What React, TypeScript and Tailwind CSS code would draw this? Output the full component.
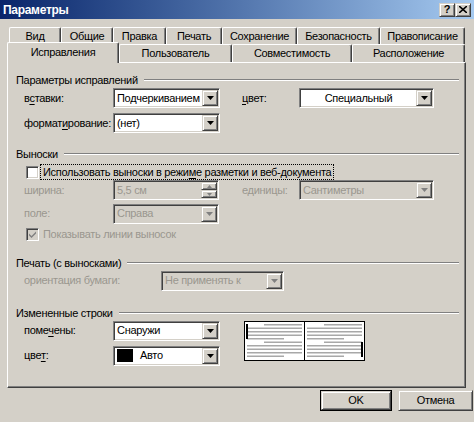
import type { ReactNode } from "react";

const sunken =
  "border border-t-[#808080] border-l-[#808080] border-r-white border-b-white shadow-[inset_1px_1px_0_#404040,inset_-1px_-1px_0_#d4d0c8]";
const raised =
  "border border-t-[#d4d0c8] border-l-[#d4d0c8] border-r-[#404040] border-b-[#404040] shadow-[inset_1px_1px_0_#ffffff,inset_-1px_-1px_0_#808080]";

function Arrow({ disabled }: { disabled?: boolean }) {
  return (
    <div className={`w-[16px] h-full flex items-center justify-center bg-[#d4d0c8] ${raised}`}>
      <svg width="7" height="4" viewBox="0 0 7 4">
        <path d="M0 0h7L3.5 4z" fill={disabled ? "#808080" : "#000"} />
      </svg>
    </div>
  );
}

function Combo({
  w,
  value,
  disabled,
  center,
  swatch,
}: {
  w: string;
  value: string;
  disabled?: boolean;
  center?: boolean;
  swatch?: boolean;
}) {
  return (
    <div className={`flex h-[20px] ${w} ${sunken} p-[1px] ${disabled ? "bg-[#d4d0c8]" : "bg-white"}`}>
      <div
        className={`flex-1 flex items-center overflow-hidden whitespace-nowrap px-[2px] ${
          center ? "justify-center" : ""
        } ${disabled ? "text-[#9a978f]" : "text-black"}`}
      >
        {swatch && <div className="w-[16px] h-[13px] bg-black mr-[7px]" />}
        {value}
      </div>
      <Arrow disabled={disabled} />
    </div>
  );
}

function Spin({ w, value }: { w: string; value: string }) {
  return (
    <div className={`flex h-[20px] ${w} ${sunken} p-[1px] bg-[#d4d0c8]`}>
      <div className="flex-1 flex items-center px-[2px] text-[#9a978f]">{value}</div>
      <div className="flex flex-col w-[16px] h-full">
        <div className={`flex-1 flex items-center justify-center bg-[#d4d0c8] ${raised}`}>
          <svg width="5" height="3" viewBox="0 0 5 3">
            <path d="M0 3h5L2.5 0z" fill="#808080" />
          </svg>
        </div>
        <div className={`flex-1 flex items-center justify-center bg-[#d4d0c8] ${raised}`}>
          <svg width="5" height="3" viewBox="0 0 5 3">
            <path d="M0 0h5L2.5 3z" fill="#808080" />
          </svg>
        </div>
      </div>
    </div>
  );
}

function Group({ label, mt }: { label: string; mt: string }) {
  return (
    <div className={`flex items-center h-[12px] pl-[8px] pr-[6px] ${mt}`}>
      <span className="whitespace-nowrap">{label}</span>
      <div className="flex-1 ml-[6px] border-t border-t-[#808080] border-b border-b-white" />
    </div>
  );
}

function Check({ checked, disabled }: { checked?: boolean; disabled?: boolean }) {
  return (
    <div className={`w-[13px] h-[13px] ${sunken} flex items-center justify-center ${disabled ? "bg-[#d4d0c8]" : "bg-white"}`}>
      {checked && (
        <svg width="7" height="7" viewBox="0 0 7 7">
          <path d="M0 2.5l2.5 2.5L7 0.5v2L2.5 7 0 4.5z" fill={disabled ? "#808080" : "#000"} />
        </svg>
      )}
    </div>
  );
}

function Tab({ w, children }: { w: string; children: ReactNode }) {
  return (
    <div
      className={`${w} h-full flex items-center justify-center border-t border-l border-t-white border-l-white border-r border-r-[#404040] shadow-[inset_-1px_0_0_#808080] rounded-tl-[2px] rounded-tr-[2px] whitespace-nowrap`}
    >
      {children}
    </div>
  );
}

function Preview() {
  const lines = [3, 6.5, 10, 13.5, 17, 20.5, 24, 27.5, 31, 34.5];
  const page = (x: number, bar: "left" | "right") => (
    <g>
      <rect x={x + 0.5} y={0.5} width={60} height={39} fill="#fff" stroke="#000" />
      {lines.map((y, i) => {
        const start = i === 0 || i === 5 ? x + 20 : x + 3;
        const end = i === 4 || i === 9 ? x + 40 : x + 58;
        return <rect key={y} x={start} y={y} width={end - start} height={1.5} fill="#a8a8a8" />;
      })}
      {bar === "left" ? (
        <rect x={x + 2} y={3} width={2} height={15} fill="#000" />
      ) : (
        <rect x={x + 57} y={21} width={2} height={15} fill="#000" />
      )}
    </g>
  );
  return (
    <svg width="122" height="41" viewBox="0 0 122 41">
      {page(0, "left")}
      {page(60, "right")}
    </svg>
  );
}

function U({ children }: { children: ReactNode }) {
  return <span className="underline underline-offset-2">{children}</span>;
}

export default function App() {
  return (
    <div
      className="w-[474px] h-[422px] bg-[#d4d0c8] overflow-hidden flex flex-col text-[11px] leading-none tracking-[-0.3px] text-black"
      style={{ fontFamily: '"Liberation Sans", Arial, sans-serif' }}
    >
      {/* title bar */}
      <div className="h-[19px] flex items-center bg-gradient-to-r from-[#0a246a] to-[#a6caf0] pl-[3px] pr-[3px]">
        <span className="text-white font-bold text-[12px]">Параметры</span>
        <div className="ml-auto flex">
          <div className={`w-[16px] h-[14px] bg-[#d4d0c8] ${raised} flex items-center justify-center font-bold text-[11px]`}>?</div>
          <div className={`w-[16px] h-[14px] bg-[#d4d0c8] ${raised} flex items-center justify-center`}>
            <svg width="8" height="7" viewBox="0 0 8 7">
              <path d="M0 0l8 7M8 0L0 7" stroke="#000" strokeWidth="1.6" />
            </svg>
          </div>
        </div>
      </div>

      {/* tabs back row */}
      <div className="flex h-[17px] mt-[8px] pl-[9px]">
        <Tab w="w-[52px]">Вид</Tab>
        <Tab w="w-[52px]">Общие</Tab>
        <Tab w="w-[53px]">Правка</Tab>
        <Tab w="w-[56px]">Печать</Tab>
        <Tab w="w-[75px]">Сохранение</Tab>
        <Tab w="w-[83px]">Безопасность</Tab>
        <Tab w="w-[85px]">Правописание</Tab>
      </div>

      {/* tabs front row */}
      <div className="flex items-end h-[18px] pl-[7px]">
        <div className="relative z-10 w-[112px] h-[21px] -mb-[1px] bg-[#d4d0c8] flex items-center justify-center border-t border-l border-t-white border-l-white border-r border-r-[#404040] shadow-[inset_-1px_0_0_#808080] rounded-tl-[2px] rounded-tr-[2px] pb-[2px]">
          Исправления
        </div>
        <Tab w="w-[113px]">Пользователь</Tab>
        <Tab w="w-[120px]">Совместимость</Tab>
        <Tab w="w-[113px]">Расположение</Tab>
      </div>

      {/* panel */}
      <div className="ml-[7px] w-[459px] h-[326px] border border-t-white border-l-white border-r-[#404040] border-b-[#404040] shadow-[inset_-1px_-1px_0_#808080] flex flex-col">
        <Group label="Параметры исправлений" mt="mt-[11px]" />
        <div className="flex items-center h-[20px] mt-[2px] pl-[16px]">
          <span className="w-[89px]">
            в<U>с</U>тавки:
          </span>
          <Combo w="w-[107px]" value="Подчеркиванием" />
          <span className="ml-[22px] w-[57px]">
            <U>ц</U>вет:
          </span>
          <Combo w="w-[135px]" value="Специальный" center />
        </div>
        <div className="flex items-center h-[20px] mt-[5px] pl-[16px]">
          <span className="w-[89px]">
            формат<U>и</U>рование:
          </span>
          <Combo w="w-[107px]" value="(нет)" />
        </div>

        <Group label="Выноски" mt="mt-[15px]" />
        <div className="flex items-center h-[16px] mt-[4px] pl-[18px]">
          <Check />
          <span className="ml-[1px] px-[2px] h-[16px] flex items-center border border-dotted border-black">
            Использовать выноски в режи<U>м</U>е разметки и веб-документа
          </span>
        </div>
        <div className="flex items-center h-[20px] mt-[0px] pl-[16px]">
          <span className="w-[89px] text-[#9a978f]">ширина:</span>
          <Spin w="w-[106px]" value="5,5 см" />
          <span className="ml-[23px] w-[57px] text-[#9a978f]">единицы:</span>
          <Combo w="w-[135px]" value="Сантиметры" disabled />
        </div>
        <div className="flex items-center h-[19px] mt-[4px] pl-[16px]">
          <span className="w-[89px] text-[#9a978f]">поле:</span>
          <Combo w="w-[106px]" value="Справа" disabled />
        </div>
        <div className="flex items-center h-[14px] mt-[4px] pl-[18px]">
          <Check checked disabled />
          <span className="ml-[4px] text-[#9a978f]">Показывать линии выносок</span>
        </div>

        <Group label="Печать (с выносками)" mt="mt-[16px]" />
        <div className="flex items-center h-[19px] mt-[2px] pl-[16px]">
          <span className="w-[137px] text-[#9a978f]">ориентация бумаги:</span>
          <Combo w="w-[123px]" value="Не применять к" disabled />
        </div>

        <Group label="Измененные строки" mt="mt-[17px]" />
        <div className="flex mt-[2px] pl-[16px]">
          <div className="flex flex-col">
            <div className="flex items-center h-[19px]">
              <span className="w-[89px]">
                поме<U>ч</U>ены:
              </span>
              <Combo w="w-[107px]" value="Снаружи" />
            </div>
            <div className="flex items-center h-[19px] mt-[6px]">
              <span className="w-[89px]">
                цве<U>т</U>:
              </span>
              <Combo w="w-[107px]" value="Авто" swatch />
            </div>
          </div>
          <div className="ml-[24px]">
            <Preview />
          </div>
        </div>
      </div>

      {/* buttons */}
      <div className="flex mt-[2px] pl-[320px] gap-[6px]">
        <div className="w-[72px] h-[21px] border border-black flex">
          <div className={`flex-1 bg-[#d4d0c8] ${raised} flex items-center justify-center`}>OK</div>
        </div>
        <div className={`w-[75px] h-[21px] bg-[#d4d0c8] ${raised} flex items-center justify-center`}>Отмена</div>
      </div>
    </div>
  );
}
